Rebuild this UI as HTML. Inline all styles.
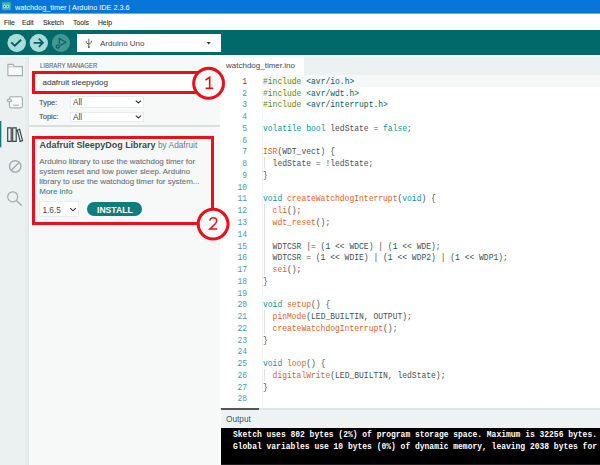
<!DOCTYPE html>
<html><head><meta charset="utf-8">
<style>
*{margin:0;padding:0;box-sizing:border-box}
html,body{width:600px;height:465px;overflow:hidden;background:#fff;font-family:"Liberation Sans",sans-serif;position:relative}
.a{position:absolute;white-space:pre}
.hv{-webkit-text-stroke:0.08px currentColor}
#title{left:0;top:0;width:600px;height:14px;background:linear-gradient(#0875d8 0,#0875d8 13px,#6aa8e6 13px)}
#ttext{left:15px;top:1.6px;font-size:7.3px;color:#fff;line-height:11px}
#logo{left:2px;top:2px;width:9px;height:8px;background:#17a89a;border-radius:1px}
#menu{left:0;top:14px;width:600px;height:16px;background:#fff}
.mi{top:16.5px;font-size:7.5px;transform:scaleX(0.9);transform-origin:0 0;color:#1e1e1e;line-height:11px}
#tool{left:0;top:30px;width:600px;height:25px;background:#006a6b}
.btn{top:34px;width:18px;height:18px;border-radius:50%;background:#a6d6d4}
#board{left:77px;top:33.5px;width:144px;height:18.5px;background:#fff}
#btext{left:100px;top:37.5px;font-size:8px;color:#3d484d;line-height:11px}
#side{left:0;top:55px;width:29px;height:410px;background:linear-gradient(90deg,#ebf0f0 0,#ebf0f0 25px,#e7eced 25px,#e7eced 28px,#e1e6e7 28px)}
#panel{left:29px;top:55px;width:191px;height:410px;background:#f7f9f9}
#editor{left:220px;top:55px;width:380px;height:410px;background:#fff}
#tabbar{left:220px;top:57px;width:380px;height:17.9px;background:#ecf1f1}
#tab{left:220px;top:57px;width:84px;height:17.9px;background:#fff}
#tabtext{left:226px;top:61px;font-size:8px;color:#3d484d;line-height:10px}
#code{left:262.5px;top:76.8px;font-family:"Liberation Mono",monospace;font-size:9px;transform:scaleX(0.8889);transform-origin:0 0;line-height:11.77px;color:#434f54}
#nums{left:220px;top:76.8px;width:27px;text-align:right;font-family:"Liberation Mono",monospace;font-size:9px;transform:scaleX(0.8889);transform-origin:100% 0;line-height:11.77px;color:#4b98aa}
#hl{left:262px;top:74.9px;width:338px;height:11.77px;background:#f6f8f8}
.pp{color:#64850c}.st{color:#005c5f}.kw{color:#00979d}.fn{color:#d9621c}.nm{color:#005c5f}
#outhdr{left:220px;top:409.5px;width:380px;height:18px;background:#eef2f2}
#outline{left:220px;top:408px;width:380px;height:1.5px;background:#e0e5e5}
#outline2{left:221px;top:408px;width:38px;height:1.5px;background:#555}
#outtext{left:226px;top:413.5px;font-size:8.3px;color:#555;line-height:10px}
#term{left:221px;top:427.6px;width:379px;height:38px;background:#000}
#termtext{left:232.7px;top:430px;font-family:"Liberation Mono",monospace;font-weight:bold;font-size:9px;transform:scaleX(0.8867);transform-origin:0 0;line-height:11.9px;color:#fff}
</style></head><body>
<div class="a" id="title"></div>
<div class="a" id="logo"></div>
<div class="a" id="ttext">watchdog_timer | Arduino IDE 2.3.6</div>
<div class="a" id="menu"></div>
<div class="a mi hv" style="left:4px">File</div>
<div class="a mi hv" style="left:22.4px">Edit</div>
<div class="a mi hv" style="left:43px">Sketch</div>
<div class="a mi hv" style="left:73.3px">Tools</div>
<div class="a mi hv" style="left:98px">Help</div>
<div class="a" id="tool"></div>
<div class="a btn" style="left:7.5px"></div>
<div class="a btn" style="left:29.5px"></div>
<div class="a btn" style="left:52px;background:#3f8f8f"></div>
<div class="a" id="board"></div>
<div class="a" id="btext">Arduino Uno</div>

<div class="a" id="side"></div>
<div class="a" id="panel"></div>

<div class="a" style="left:39.5px;top:61.8px;font-size:7.2px;transform:scaleX(0.833);transform-origin:0 0;line-height:8px;color:#5b6569;-webkit-text-stroke:0.1px currentColor">LIBRARY MANAGER</div>
<div class="a" style="left:32px;top:71px;width:180px;height:22.5px;background:#fff;border:3px solid #e8101a"></div>
<div class="a" style="left:42.5px;top:78.2px;font-size:8px;line-height:10px;color:#3d484d;-webkit-text-stroke:0.1px currentColor">adafruit sleepydog</div>
<div class="a" style="left:39.4px;top:97.6px;font-size:8px;transform:scaleX(0.94);transform-origin:0 0;line-height:10px;color:#3d484d;-webkit-text-stroke:0.1px currentColor">Type:</div>
<div class="a" style="left:70px;top:96.4px;width:74.4px;height:11.2px;background:#fff;border:1px solid #e8ecec"></div>
<div class="a" style="left:73px;top:98px;font-size:8.2px;line-height:10px;color:#3d484d">All</div>
<div class="a" style="left:39.4px;top:112px;font-size:8px;transform:scaleX(0.94);transform-origin:0 0;line-height:10px;color:#3d484d;-webkit-text-stroke:0.1px currentColor">Topic:</div>
<div class="a" style="left:70px;top:111.6px;width:74.4px;height:10.8px;background:#fff;border:1px solid #e8ecec"></div>
<div class="a" style="left:73px;top:112.7px;font-size:8.2px;line-height:10px;color:#3d484d">All</div>
<div class="a" style="left:29px;top:125.3px;width:192px;height:1.5px;background:#d9dfdf"></div>
<div class="a" style="left:32px;top:136.3px;width:182px;height:88.3px;border:3px solid #e8101a"></div>
<div class="a" style="left:39.6px;top:139.5px;font-size:8.96px;line-height:11px;color:#3d484d;font-weight:bold">Adafruit SleepyDog Library <span style="font-weight:normal;font-size:8.3px;color:#6b777b">by Adafruit</span></div>
<div class="a" style="left:39.3px;top:157px;font-size:7.95px;line-height:9.9px;color:#66727a;-webkit-text-stroke:0.1px currentColor">Arduino library to use the watchdog timer for
system reset and low power sleep. Arduino
library to use the watchdog timer for system...
<span style="color:#1d8a8c">More info</span></div>
<div class="a" style="left:39px;top:201px;width:40px;height:16px;background:#fff;border:1px solid #e8ecec"></div>
<div class="a" style="left:42.4px;top:204.5px;font-size:8.3px;line-height:10px;color:#3d484d">1.6.5</div>
<div class="a" style="left:87px;top:202.4px;width:55px;height:14px;background:#0f7d7e;border-radius:7px"></div>
<div class="a" style="left:97px;top:205px;font-size:8.6px;line-height:10px;color:#fff;font-weight:bold;letter-spacing:0px">INSTALL</div>
<div class="a" id="editor"></div>
<div class="a" style="left:0;top:55px;width:220px;height:2px;background:#fcfdfd"></div>
<div class="a" id="tabbar"></div>
<div class="a" id="tab"></div>
<div class="a" id="tabtext">watchdog_timer.ino</div>
<div class="a" id="hl"></div>
<div class="a" style="left:262px;top:86.7px;width:1px;height:320px;background:#f2f4f4"></div>
<div class="a" style="left:264px;top:157.29px;width:1px;height:11.77px;background:#dfe3e3"></div>
<div class="a" style="left:264px;top:204.37px;width:1px;height:70.62px;background:#dfe3e3"></div>
<div class="a" style="left:264px;top:310.30px;width:1px;height:23.54px;background:#dfe3e3"></div>
<div class="a" style="left:264px;top:369.15px;width:1px;height:11.77px;background:#dfe3e3"></div>
<div class="a" id="nums"><span style="color:#4e5478">1</span>
2
3
4
5
6
7
8
9
10
11
12
13
14
15
16
17
18
19
20
21
22
23
24
25
26
27
28</div>
<div class="a" id="code"><span class="pp">#include</span> <span class="st">&lt;avr/io.h&gt;</span>
<span class="pp">#include</span> <span class="st">&lt;avr/wdt.h&gt;</span>
<span class="pp">#include</span> <span class="st">&lt;avr/interrupt.h&gt;</span>

<span class="kw">volatile</span> <span class="kw">bool</span> ledState = <span class="kw">false</span>;

<span class="fn">ISR</span>(WDT_vect) {
  ledState = !ledState;
}

<span class="kw">void</span> <span class="fn">createWatchdogInterrupt</span>(<span class="kw">void</span>) {
  <span class="fn">cli</span>();
  <span class="fn">wdt_reset</span>();

  WDTCSR |= (<span class="nm">1</span> &lt;&lt; WDCE) | (<span class="nm">1</span> &lt;&lt; WDE);
  WDTCSR = (<span class="nm">1</span> &lt;&lt; WDIE) | (<span class="nm">1</span> &lt;&lt; WDP2) | (<span class="nm">1</span> &lt;&lt; WDP1);
  <span class="fn">sei</span>();
}

<span class="kw">void</span> <span class="fn">setup</span>() {
  <span class="fn">pinMode</span>(LED_BUILTIN, OUTPUT);
  <span class="fn">createWatchdogInterrupt</span>();
}

<span class="kw">void</span> <span class="fn">loop</span>() {
  <span class="fn">digitalWrite</span>(LED_BUILTIN, ledState);
}
</div>
<div class="a" id="outline"></div>
<div class="a" id="outline2"></div>
<div class="a" id="outhdr"></div>
<div class="a" id="outtext">Output</div>
<div class="a" id="term"></div>
<div class="a" style="left:221px;top:464px;width:379px;height:1px;background:#1e1e1e"></div>
<div class="a" style="left:220px;top:409.5px;width:1px;height:56px;background:#fbfcfc"></div>
<div class="a" id="termtext">Sketch uses 802 bytes (2%) of program storage space. Maximum is 32256 bytes.
Global variables use 10 bytes (0%) of dynamic memory, leaving 2038 bytes for local variables. Maximum is 2048 bytes.</div>

<svg class="a" style="left:0;top:0" width="600" height="465" viewBox="0 0 600 465">
 <!-- logo -->
 <rect x="2" y="2.5" width="8.5" height="7.6" rx="1" fill="#3fb8a6"/>
 <circle cx="4.7" cy="6.4" r="1.25" fill="#2a7f80" stroke="#d8f6ee" stroke-width="0.9"/>
 <circle cx="7.6" cy="6.4" r="1.25" fill="#2a7f80" stroke="#d8f6ee" stroke-width="0.9"/>
 <!-- toolbar buttons -->
 <circle cx="16.3" cy="42.8" r="8.9" fill="#a6dcd9"/>
 <path d="M11.2 42.4l3.6 3.4l6.3-6.1" fill="none" stroke="#0d5f61" stroke-width="1.9"/>
 <circle cx="38.4" cy="42.8" r="8.7" fill="#a6dcd9"/>
 <path d="M33.6 42.8h9.2M38.9 38.7l4 4.1l-4 4.1" fill="none" stroke="#0d5f61" stroke-width="1.8"/>
 <circle cx="60.9" cy="42.9" r="8.8" fill="#3f9894"/>
 <path d="M59.3 44.6v-6l6.6 3.7l-5.6 3.2" fill="none" stroke="#0e5d5e" stroke-width="1.2"/>
 <circle cx="57.8" cy="46.6" r="1.6" fill="none" stroke="#0e5d5e" stroke-width="1.2"/>
 <!-- usb icon -->
 <path d="M88.8 38.8v8.6M86.2 41v1.6l2.6 1.8M91.4 40.6v1.8l-2.6 1.8" fill="none" stroke="#4e5b61" stroke-width="0.9"/>
 <circle cx="88.8" cy="47.2" r="0.9" fill="#4e5b61"/>
 <path d="M206.6 42h4.2l-2.1 2.4z" fill="#333"/>
 <!-- sidebar icons -->
 <path d="M7.9 64.4h5.2l1.3 2.1h8v9.1h-14.5z" fill="#f7f9f9" stroke="#a4acad" stroke-width="1.1"/>
 <path d="M8 66.9h14.4" fill="none" stroke="#a4acad" stroke-width="0.6"/>
 <rect x="9.4" y="96.7" width="13" height="11.2" rx="1.6" fill="#f7f9f9" stroke="#a4acad" stroke-width="1.1"/>
 <path d="M7.4 99.3h4v2.2h-4z" fill="#ebf0f0" stroke="#a4acad" stroke-width="1"/>
 <path d="M13.2 105.2h5.8" stroke="#a4acad" stroke-width="1"/>
 <rect x="0" y="121" width="1.3" height="26.3" fill="#0d7a7b"/>
 <path d="M7.7 127.9h3.5v13.4h-3.5z M12.7 127.9h3.5v13.4h-3.5z M17.3 130.2l2.3-.9l2.9 11.3l-2.3 .9z" fill="none" stroke="#34444a" stroke-width="1.15"/>
 <circle cx="15.2" cy="166.4" r="5.7" fill="none" stroke="#a4acad" stroke-width="1.4"/>
 <path d="M11.3 170.3l7.8-7.8" stroke="#a4acad" stroke-width="1.4"/>
 <circle cx="12.7" cy="196.8" r="5" fill="none" stroke="#a4acad" stroke-width="1.2"/>
 <path d="M16.3 200.4l5.6 5.4" stroke="#a4acad" stroke-width="1.4"/>
 <!-- select chevrons -->
 <path d="M135.8 100.6l2.6 2.4l2.6-2.4M135.8 115.6l2.6 2.4l2.6-2.4M70.2 208.2l2.8 2.6l2.8-2.6" fill="none" stroke="#333" stroke-width="1.1"/>
 <!-- red circles -->
 <circle cx="208.6" cy="83.3" r="14.9" fill="#fafbfb" stroke="#e8101a" stroke-width="3.1"/>
 <path d="M205.5 80l4.2-2.7v11.2M205.6 88.4h7.6" fill="none" stroke="#e8101a" stroke-width="1.6"/>
 <circle cx="213.1" cy="224.1" r="14.9" fill="#fafbfb" stroke="#e8101a" stroke-width="3.1"/>
 <path d="M209.8 220.6c.3-1.8 1.7-2.9 3.5-2.9c2 0 3.4 1.3 3.4 3.1c0 1.2-.6 2.1-1.6 3.2l-5.3 5.1h7.4" fill="none" stroke="#e8101a" stroke-width="1.5"/>
</svg>

</body></html>
